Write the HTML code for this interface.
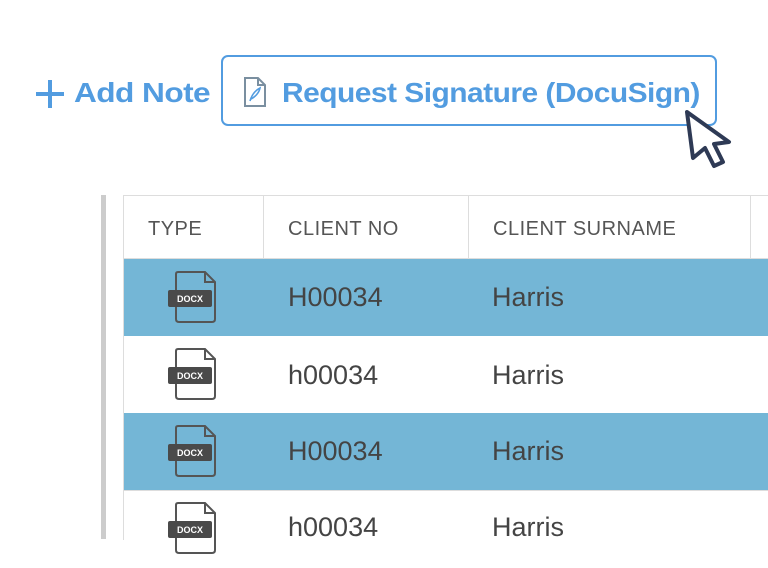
<!DOCTYPE html><html><head><style>
body{margin:0;width:768px;height:539px;background:#fff;position:relative;overflow:hidden;font-family:"Liberation Sans",sans-serif}
.a{position:absolute}
.blue{color:#529ce0;font-weight:bold;font-size:28px;letter-spacing:-0.5px;transform-origin:left center}
.h{position:absolute;top:196px;height:63px;line-height:66px;font-size:20px;color:#555;border-right:1px solid #ddd;padding-left:24px;box-sizing:border-box;letter-spacing:0.5px}
.r{position:absolute;left:124px;width:644px;height:77px}
.t{position:absolute;font-size:27px;color:#444}
</style></head><body>
<svg class="a" style="left:34px;top:78px" width="32" height="32"><path d="M16 2V30M2 16H30" stroke="#529ce0" stroke-width="4"/></svg>
<div class="a blue" style="left:74px;top:77px;transform:scaleX(1.13)">Add Note</div>
<div class="a" style="left:221px;top:55px;width:496px;height:71px;border:2px solid #529ce0;border-radius:7px;box-sizing:border-box"></div>
<svg class="a" style="left:243px;top:76px" width="24" height="32"><path d="M2 2H15L22 9V30H2Z M15 2V9H22" fill="none" stroke="#7a8fa0" stroke-width="2"/><path d="M7 25C9 18 13 14 17 12C16 17 12 21 8 23" fill="none" stroke="#529ce0" stroke-width="1.6"/></svg>
<div class="a blue" style="left:282px;top:77px;transform:scaleX(1.07)">Request Signature (DocuSign)</div>
<svg class="a" style="left:683px;top:108px" width="54" height="62"><path d="M4 4L46 34L31 36L40 54L31 58L22 40L10 50Z" fill="#fff" stroke="#2e3a55" stroke-width="4" stroke-linejoin="round"/></svg>
<div class="a" style="left:101px;top:195px;width:5px;height:344px;background:#ccc"></div>
<div class="a" style="left:123px;top:195px;width:645px;height:344px;border-left:1px solid #ddd;border-top:1px solid #ddd"></div>
<div class="h" style="left:124px;width:140px">TYPE</div>
<div class="h" style="left:264px;width:205px">CLIENT NO</div>
<div class="h" style="left:469px;width:282px">CLIENT SURNAME</div>
<div class="a" style="left:124px;top:258px;width:644px;height:1px;background:#ddd"></div>
<div class="r" style="top:259px;background:#74b6d6"></div>
<div class="r" style="top:336px;background:#fff"></div>
<div class="r" style="top:413px;background:#74b6d6"></div>
<div class="r" style="top:490px;background:#fff;border-top:1px solid #ddd"></div>
<div class="t" style="left:288px;top:282px">H00034</div><div class="t" style="left:492px;top:282px">Harris</div>
<div class="t" style="left:288px;top:360px">h00034</div><div class="t" style="left:492px;top:360px">Harris</div>
<div class="t" style="left:288px;top:436px">H00034</div><div class="t" style="left:492px;top:436px">Harris</div>
<div class="t" style="left:288px;top:512px">h00034</div><div class="t" style="left:492px;top:512px">Harris</div>
<svg width="0" height="0" style="position:absolute"><defs><g id="d"><path d="M11 3Q11 1 13 1H40L50 11V48Q50 51 47 51H14Q11 51 11 48Z" fill="none" stroke="#555" stroke-width="2"/><path d="M40 1V11H50" fill="none" stroke="#555" stroke-width="2"/><rect x="3" y="19" width="44" height="17" rx="2" fill="#4a4a4a"/><text x="25" y="31" font-size="9" fill="#fff" font-weight="bold" text-anchor="middle" font-family="Liberation Sans">DOCX</text></g></defs></svg>
<svg class="a" style="left:165px;top:271px" width="54" height="54"><use href="#d"/></svg>
<svg class="a" style="left:165px;top:348px" width="54" height="54"><use href="#d"/></svg>
<svg class="a" style="left:165px;top:425px" width="54" height="54"><use href="#d"/></svg>
<svg class="a" style="left:165px;top:502px" width="54" height="54"><use href="#d"/></svg>
</body></html>
